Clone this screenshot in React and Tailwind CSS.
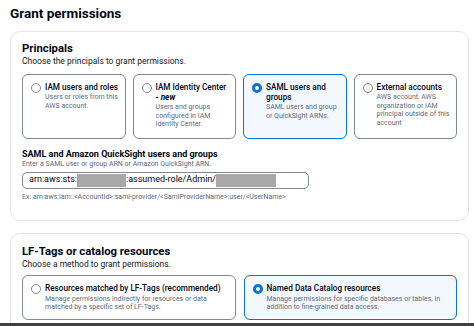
import React from "react";

const principals = [
  {
    title: "IAM users and roles",
    desc: "Users or roles from this AWS account.",
  },
  {
    title: (
      <>
        IAM Identity Center <span className="font-bold italic">- new</span>
      </>
    ),
    desc: "Users and groups configured in IAM Identity Center.",
  },
  {
    title: "SAML users and groups",
    desc: "SAML users and group or QuickSight ARNs.",
    selected: true,
  },
  {
    title: "External accounts",
    desc: "AWS account, AWS organization or IAM principal outside of this account",
  },
];

const resources = [
  {
    title: "Resources matched by LF-Tags (recommended)",
    desc: "Manage permissions indirectly for resources or data matched by a specific set of LF-Tags.",
  },
  {
    title: "Named Data Catalog resources",
    desc: "Manage permissions for specific databases or tables, in addition to fine-grained data access.",
    selected: true,
  },
];

const Radio = ({ selected }) =>
  selected ? (
    <span className="mt-[1px] h-[10px] w-[10px] shrink-0 rounded-full border-[3px] border-[#0972d3] bg-white" />
  ) : (
    <span className="mt-[1px] h-[10px] w-[10px] shrink-0 rounded-full border border-[#7d8998] bg-white" />
  );

const Tile = ({ item, wide }) => (
  <div
    className={`flex gap-[4px] rounded-[6px] border pl-[8px] pr-[4px] pt-[7px] ${
      wide ? "pb-[7px]" : "pb-[9px]"
    } ${
      item.selected
        ? "border-[#0972d3] bg-[#f2f8fd]"
        : "border-[#7d8998] bg-white"
    }`}
  >
    <Radio selected={item.selected} />
    <div className="min-w-0">
      <div className="text-[8.2px] font-medium leading-[10px] text-[#000716]">
        {item.title}
      </div>
      <div
        className={`text-[7px] leading-[8.5px] text-[#5f6b7a] ${
          wide ? "mt-[2px]" : "mt-[1px]"
        }`}
      >
        {item.desc}
      </div>
    </div>
  </div>
);

export default function App() {
  return (
    <div
      className="flex h-[326px] w-[474px] flex-col overflow-hidden bg-white text-[#000716]"
      style={{ fontFamily: "Roboto, 'Liberation Sans', sans-serif" }}
    >
      <div className="flex-1 overflow-hidden">
        <h1 className="ml-[10px] pt-[5px] text-[13.5px] font-bold leading-[16px]">
          Grant permissions
        </h1>

        {/* Principals */}
        <section className="ml-[10px] mt-[10px] w-[459px] rounded-[10px] border border-[#e2e4e7] px-[11px] pb-[19px] pt-[10px]">
          <h2 className="text-[11.3px] font-bold leading-[13px]">Principals</h2>
          <p className="mt-[1px] text-[8.5px] leading-[10px] text-[#16191f]">
            Choose the principals to grant permissions.
          </p>

          <div className="mt-[8px] grid grid-cols-4 gap-[7px]">
            {principals.map((p, i) => (
              <Tile key={i} item={p} />
            ))}
          </div>

          <div className="mt-[10px] text-[9px] font-bold leading-[10px]">
            SAML and Amazon QuickSight users and groups
          </div>
          <div className="mt-[1px] text-[7px] leading-[8px] text-[#5f6b7a]">
            Enter a SAML user or group ARN or Amazon QuickSight ARN.
          </div>
          <div className="mt-[4px] flex h-[17px] w-[287px] items-center rounded-[5px] border border-[#7d8998] pl-[6px] text-[9px] text-[#000716]">
            <span>arn:aws:sts:</span>
            <span className="h-[13px] w-[49px] bg-[#a8a8a8]" />
            <span>:assumed-role/Admin/</span>
            <span className="h-[13px] w-[60px] bg-[#a8a8a8]" />
          </div>
          <div className="mt-[4px] text-[7px] leading-[8px] text-[#5f6b7a]">
            {"Ex: arn:aws:iam::<AccountId>:saml-provider/<SamlProviderName>:user/<UserName>"}
          </div>
        </section>

        {/* LF-Tags */}
        <section className="ml-[10px] mt-[12px] w-[459px] rounded-[10px] border border-[#e2e4e7] px-[11px] pb-[16px] pt-[11px]">
          <h2 className="text-[11.3px] font-bold leading-[13px]">
            LF-Tags or catalog resources
          </h2>
          <p className="mt-[1px] text-[8.5px] leading-[10px] text-[#16191f]">
            Choose a method to grant permissions.
          </p>
          <div className="mt-[6px] grid grid-cols-2 gap-[8px]">
            {resources.map((r, i) => (
              <Tile key={i} item={r} wide />
            ))}
          </div>
        </section>
      </div>
      <div className="h-[3px] shrink-0 bg-[#414141]" />
    </div>
  );
}
